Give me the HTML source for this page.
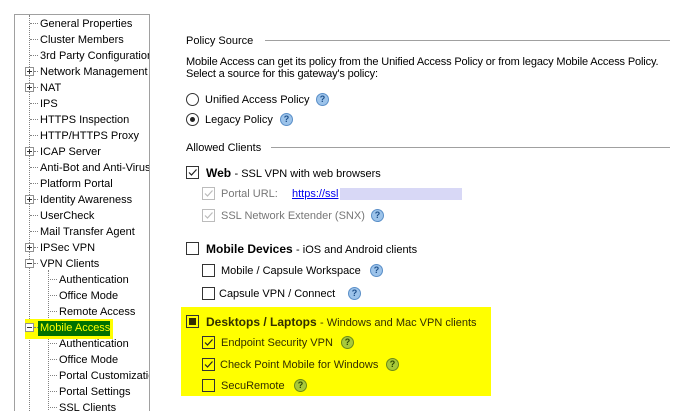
<!DOCTYPE html>
<html style="overflow:hidden;height:411px"><head><meta charset="utf-8"><style>
body{margin:0;width:690px;height:411px;overflow:hidden;background:#fff;font-family:"Liberation Sans",Arial,sans-serif;font-size:11px;color:#000;position:relative}
.a{position:absolute;white-space:nowrap;line-height:14px}
.tree{position:absolute;left:14px;top:14px;width:134px;height:400px;border:1px solid #a0a0a0;overflow:hidden}
.vl{position:absolute;border-left:1px dotted #808080}
.hl{position:absolute;border-top:1px dotted #808080}
.pb{position:absolute;width:7px;height:7px;border:1px solid #919191;background:#fff;font-size:0}
.pb:before{content:"";position:absolute;left:1px;top:3px;width:5px;height:1px;background:#333}
.pb.p:after{content:"";position:absolute;left:3px;top:1px;width:1px;height:5px;background:#333}
.line{position:absolute;height:1px;background:#a0a0a0}
.cb{position:absolute;width:11px;height:11px;border:1px solid #333;background:#fff}
.cb.g{border-color:#bcbcbc}
.cb svg{position:absolute;left:0;top:0}
.q{position:absolute;width:11px;height:11px;border-radius:50%;background:#9cc3ea;border:1px solid #5a8fc8;font-size:9px;line-height:11px;text-align:center;color:#1d4f8a;font-weight:bold}
.q.y{background:#a8c93a;border-color:#6b8a1a;color:#2f4a00}
.rd{position:absolute;width:11px;height:11px;border:1px solid #333;border-radius:50%;background:#fff}
</style></head><body>
<div class="tree">
<div class="vl" style="left:14px;top:0;height:400px"></div>
<div class="vl" style="left:33px;top:255px;height:56px"></div>
<div class="vl" style="left:33px;top:319px;height:90px"></div>
<div id="t" style="position:absolute;left:-15px;top:-14px;width:690px;height:420px"></div>
</div>
<script>
var items=[["General Properties",1,0],["Cluster Members",1,0],["3rd Party Configuration",1,0],["Network Management",1,"p"],["NAT",1,"p"],["IPS",1,0],["HTTPS Inspection",1,0],["HTTP/HTTPS Proxy",1,0],["ICAP Server",1,"p"],["Anti-Bot and Anti-Virus",1,0],["Platform Portal",1,0],["Identity Awareness",1,"p"],["UserCheck",1,0],["Mail Transfer Agent",1,0],["IPSec VPN",1,"p"],["VPN Clients",1,"m"],["Authentication",2,0],["Office Mode",2,0],["Remote Access",2,0],["Mobile Access",1,"m"],["Authentication",2,0],["Office Mode",2,0],["Portal Customization",2,0],["Portal Settings",2,0],["SSL Clients",2,0]];
var h="";
items.forEach(function(it,i){var y=16+16*i;var cy=y+6;
if(i==19)h+='<div style="position:absolute;left:25px;top:'+(y-2)+'px;width:88px;height:20px;background:#ffff00"></div><div style="position:absolute;left:38px;top:'+(y)+'px;width:72px;height:15px;background:#007000"></div>';
if(it[1]==1){h+='<div class="hl" style="left:'+(it[2]?34:30)+'px;top:'+cy+'px;width:'+(it[2]?4:8)+'px"></div>';
if(it[2])h+='<div class="pb '+(it[2]=="p"?"p":"")+'" style="left:25px;top:'+(cy-4)+'px"></div>';
h+='<div class="a" style="left:40px;top:'+y+'px;'+(i==19?'color:#ffff00':'')+'">'+it[0]+'</div>';}
else{h+='<div class="hl" style="left:48px;top:'+cy+'px;width:9px"></div><div class="a" style="left:59px;top:'+y+'px">'+it[0]+'</div>';}
});
document.getElementById("t").innerHTML=h;
</script>

<div class="a" style="left:186px;top:34px">Policy Source</div>
<div class="line" style="left:265px;top:40px;width:405px"></div>
<div class="a" style="left:186px;top:55px;letter-spacing:-0.14px">Mobile Access can get its policy from the Unified Access Policy or from legacy Mobile Access Policy.</div>
<div class="a" style="left:186px;top:67px;letter-spacing:-0.14px">Select a source for this gateway's policy:</div>
<div class="rd" style="left:186px;top:93px"></div>
<div class="a" style="left:205px;top:93px">Unified Access Policy</div>
<div class="q" style="left:316px;top:93px">?</div>
<div class="rd" style="left:186px;top:113px"><div style="position:absolute;left:3px;top:3px;width:5px;height:5px;border-radius:50%;background:#222"></div></div>
<div class="a" style="left:205px;top:113px">Legacy Policy</div>
<div class="q" style="left:280px;top:113px">?</div>

<div class="a" style="left:186px;top:141px">Allowed Clients</div>
<div class="line" style="left:271px;top:147px;width:399px"></div>

<div class="cb" style="left:186px;top:166px"><svg width="11" height="11"><path d="M2 5.5l2.5 2.5 5-5.5" stroke="#222" fill="none" stroke-width="1.2"/></svg></div>
<div class="a" style="left:206px;top:166px;font-size:12px"><b>Web</b> <span style="font-size:11px">- SSL VPN with web browsers</span></div>
<div class="cb g" style="left:202px;top:187px"><svg width="11" height="11"><path d="M2 5.5l2.5 2.5 5-5.5" stroke="#bbb" fill="none" stroke-width="1.2"/></svg></div>
<div class="a" style="left:221px;top:187px;color:#777">Portal URL:</div>
<div class="a" style="left:292px;top:187px;color:#0000ee;text-decoration:underline">https://ssl</div>
<div style="position:absolute;left:340px;top:188px;width:122px;height:12px;background:#d8d8f6"></div>
<div class="cb g" style="left:202px;top:209px"><svg width="11" height="11"><path d="M2 5.5l2.5 2.5 5-5.5" stroke="#bbb" fill="none" stroke-width="1.2"/></svg></div>
<div class="a" style="left:221px;top:209px;color:#777">SSL Network Extender (SNX)</div>
<div class="q" style="left:371px;top:209px">?</div>

<div class="cb" style="left:186px;top:242px"></div>
<div class="a" style="left:206px;top:242px;font-size:12px"><b>Mobile Devices</b> <span style="font-size:11px">- iOS and Android clients</span></div>
<div class="cb" style="left:202px;top:264px"></div>
<div class="a" style="left:221px;top:264px">Mobile / Capsule Workspace</div>
<div class="q" style="left:370px;top:264px">?</div>
<div class="cb" style="left:202px;top:287px"></div>
<div class="a" style="left:219px;top:287px">Capsule VPN / Connect</div>
<div class="q" style="left:348px;top:287px">?</div>

<div style="position:absolute;left:181px;top:307px;width:310px;height:89px;background:#ffff00"></div>
<div class="cb" style="left:186px;top:315px;background:#ffff00"><div style="position:absolute;left:2px;top:2px;width:7px;height:7px;background:#332f00"></div></div>
<div class="a" style="left:206px;top:315px;color:#332f00;font-size:12px"><b>Desktops / Laptops</b> <span style="font-size:11px">- Windows and Mac VPN clients</span></div>
<div class="cb" style="left:202px;top:336px;background:#ffff00"><svg width="11" height="11"><path d="M2 5.5l2.5 2.5 5-5.5" stroke="#222" fill="none" stroke-width="1.2"/></svg></div>
<div class="a" style="left:221px;top:336px;color:#332f00">Endpoint Security VPN</div>
<div class="q y" style="left:341px;top:336px">?</div>
<div class="cb" style="left:202px;top:358px;background:#ffff00"><svg width="11" height="11"><path d="M2 5.5l2.5 2.5 5-5.5" stroke="#222" fill="none" stroke-width="1.2"/></svg></div>
<div class="a" style="left:220px;top:358px;color:#332f00">Check Point Mobile for Windows</div>
<div class="q y" style="left:386px;top:358px">?</div>
<div class="cb" style="left:202px;top:379px;background:#ffff00"></div>
<div class="a" style="left:221px;top:379px;color:#332f00">SecuRemote</div>
<div class="q y" style="left:294px;top:379px">?</div>
</body></html>
